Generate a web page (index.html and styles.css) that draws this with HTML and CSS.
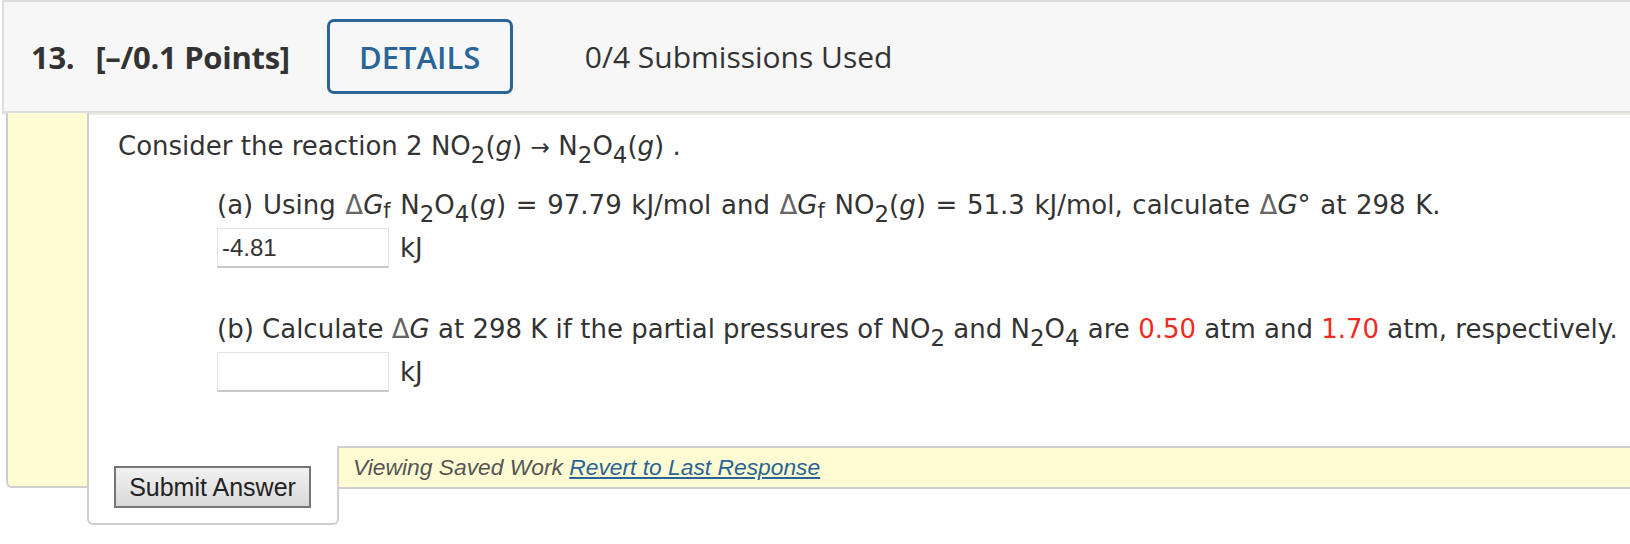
FILE: index.html
```html
<!DOCTYPE html>
<html lang="en">
<head>
<meta charset="utf-8">
<title>Question 13</title>
<link rel="stylesheet" href="styles.css">
</head>
<body>
<div class="question">
  <div class="qhead">
    <div class="qtitle"><span class="qnum">13.</span><span>[–/0.1 Points]</span></div>
    <div class="details">DETAILS</div>
    <div class="subs">0/4 Submissions Used</div>
  </div>
  <div class="qbody">
    <div class="strip"></div>
    <div class="main">
      <div class="content">
        <p class="intro">Consider the reaction 2 NO<sub>2</sub>(<i>g</i>) <span class="arrow">→</span> N<sub>2</sub>O<sub>4</sub>(<i>g</i>) .</p>
        <div class="part">
          <p class="ptext wide">(a) Using <span class="delta">Δ</span><i>G</i><sub class="f">f</sub> N<sub>2</sub>O<sub>4</sub>(<i>g</i>) = 97.79 kJ/mol and <span class="delta">Δ</span><i>G</i><sub class="f">f</sub> NO<sub>2</sub>(<i>g</i>) = 51.3 kJ/mol, calculate <span class="delta">Δ</span><i>G</i>° at 298 K.</p>
          <div class="answer"><div class="input">-4.81</div><span class="unit">kJ</span></div>
        </div>
        <div class="part part-b">
          <p class="ptext">(b) Calculate <span class="delta">Δ</span><i>G</i> at 298 K if the partial pressures of NO<sub>2</sub> and N<sub>2</sub>O<sub>4</sub> are <span class="red">0.50</span> atm and <span class="red">1.70</span> atm, respectively.</p>
          <div class="answer"><div class="input"></div><span class="unit">kJ</span></div>
        </div>
      </div>
      <div class="footer">
        <div class="submit-cell"><div class="submit">Submit Answer</div></div>
        <div class="saved"><span class="saved-text">Viewing Saved Work</span> <a class="revert" href="#">Revert to Last Response</a></div>
      </div>
    </div>
  </div>
</div>
</body>
</html>
```
FILE: styles.css
```css
html, body {
  margin: 0;
  padding: 0;
  background: #ffffff;
  overflow: hidden;
}
.question {
  width: 1650px;
  margin-left: 2px;
}
.qhead {
  box-sizing: border-box;
  height: 113px;
  background: #f7f7f7;
  border: 2px solid #dedede;
  box-shadow: 0 2px 0 #ecece2;
  display: flex;
  align-items: center;
  padding-left: 27px;
  font-family: "Open Sans", "Liberation Sans", sans-serif;
  color: #333333;
}
.qtitle {
  font-size: 31px;
  font-weight: 700;
  letter-spacing: -0.3px;
}
.qnum {
  margin-right: 21px;
}
.details {
  box-sizing: border-box;
  margin-left: 37px;
  width: 186px;
  height: 75px;
  border: 3px solid #2b6598;
  border-radius: 7px;
  color: #2b6598;
  font-size: 31px;
  font-weight: 600;
  display: flex;
  align-items: center;
  justify-content: center;
}
.subs {
  margin-left: 72px;
  font-size: 30px;
  font-weight: 400;
}
.qbody {
  display: flex;
  margin-left: 4px;
}
.strip {
  width: 79px;
  background: #fffcd4;
  border-left: 2px solid #cfcfcf;
  border-bottom: 2px solid #cfcfcf;
  border-bottom-left-radius: 6px;
  margin-bottom: 37px;
}
.main {
  flex: 1;
  display: flex;
  flex-direction: column;
}
.content {
  border-left: 2px solid #cfcfcf;
  padding: 15px 0 54px 29px;
  font-family: "DejaVu Sans", Verdana, sans-serif;
  font-size: 26px;
  color: #333333;
}
.content p {
  margin: 0;
  line-height: 36px;
}
.content p.wide {
  word-spacing: 1.4px;
}
sub {
  font-size: 0.88em;
  line-height: 0;
  vertical-align: -0.34em;
}
sub.f {
  font-size: 0.8em;
  vertical-align: -0.2em;
}
.delta {
  color: #666666;
}
.arrow {
  font-size: 0.9em;
}
.red {
  color: #ee2b1e;
}
.part {
  margin-left: 99px;
  margin-top: 22px;
}
.part-b {
  margin-top: 43px;
}
.answer {
  display: flex;
  align-items: center;
  margin-top: 5px;
}
.input {
  box-sizing: border-box;
  width: 172px;
  height: 40px;
  border: 1px solid #e2e2e2;
  border-bottom: 2px solid #c8c8c8;
  background: #ffffff;
  font-family: "Liberation Sans", Arial, sans-serif;
  font-size: 24px;
  color: #333333;
  padding-left: 4px;
  display: flex;
  align-items: center;
}
.unit {
  margin-left: 11px;
}
.footer {
  display: flex;
  align-items: flex-start;
}
.submit-cell {
  box-sizing: border-box;
  width: 252px;
  height: 79px;
  border: 2px solid #cfcfcf;
  border-top: none;
  border-radius: 0 0 6px 6px;
  background: #ffffff;
  padding: 20px 0 0 25px;
}
.submit {
  box-sizing: border-box;
  width: 197px;
  height: 42px;
  border: 2px solid #767676;
  background: linear-gradient(#f1f1f1, #d9d9d9);
  font-family: "Liberation Sans", Arial, sans-serif;
  font-size: 25px;
  color: #222222;
  display: flex;
  align-items: center;
  justify-content: center;
}
.saved {
  flex: 1;
  box-sizing: border-box;
  height: 43px;
  background: #fffcd4;
  border-top: 2px solid #cfcfcf;
  border-bottom: 2px solid #cfcfcf;
  padding-left: 14px;
  font-family: "Liberation Sans", Arial, sans-serif;
  font-size: 22.8px;
  font-style: italic;
  line-height: 39px;
  color: #555555;
}
.revert {
  color: #2a6496;
  text-decoration: underline;
}
```
